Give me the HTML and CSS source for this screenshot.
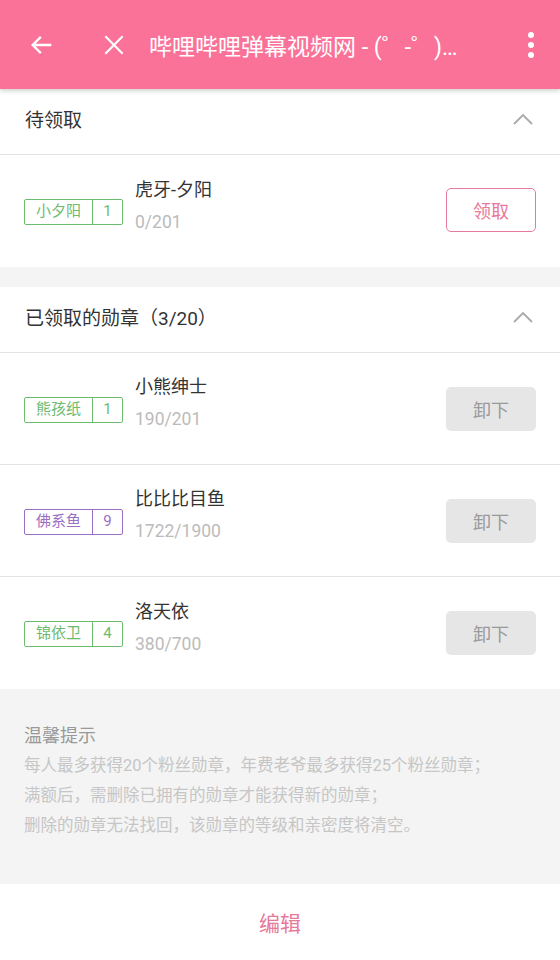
FILE: index.html
```html
<!DOCTYPE html>
<html lang="zh-CN">
<head>
    <meta charset="UTF-8">
    <meta name="viewport" content="width=device-width, initial-scale=1.0">
    <title>粉丝勋章</title>
    <link rel="stylesheet" href="styles.css">
</head>
<body>
    <div class="app">
        <div class="topbar">
            <span class="icon-btn back">
                <svg width="28" height="28" viewBox="0 0 24 24"><path d="M20 12H5M11 5l-7 7 7 7" fill="none" stroke="#fff" stroke-width="2"/></svg>
            </span>
            <span class="icon-btn close">
                <svg width="26" height="26" viewBox="0 0 24 24"><path d="M4 4l16 16M20 4L4 20" fill="none" stroke="#fff" stroke-width="2"/></svg>
            </span>
            <div class="title">哔哩哔哩弹幕视频网 - (゜-゜)つロ 干杯~-bilibili</div>
            <span class="icon-btn more">
                <svg width="10" height="28" viewBox="0 0 10 28"><circle cx="5" cy="4" r="3" fill="#fff"/><circle cx="5" cy="14" r="3" fill="#fff"/><circle cx="5" cy="24" r="3" fill="#fff"/></svg>
            </span>
        </div>

        <div class="section">
            <div class="section-head">
                <span>待领取</span>
                <svg class="chevron" width="22" height="14" viewBox="0 0 22 14"><path d="M2 12L11 3l9 9" fill="none" stroke="#aaa" stroke-width="1.8"/></svg>
            </div>
            <div class="medal-row">
                <div class="badge green"><span class="badge-name">小夕阳</span><span class="badge-level">1</span></div>
                <div class="medal-info">
                    <div class="medal-name">虎牙-夕阳</div>
                    <div class="medal-progress">0/201</div>
                </div>
                <button class="btn btn-claim">领取</button>
            </div>
        </div>

        <div class="section">
            <div class="section-head">
                <span>已领取的勋章（3/20）</span>
                <svg class="chevron" width="22" height="14" viewBox="0 0 22 14"><path d="M2 12L11 3l9 9" fill="none" stroke="#aaa" stroke-width="1.8"/></svg>
            </div>
            <div class="medal-row">
                <div class="badge green"><span class="badge-name">熊孩纸</span><span class="badge-level">1</span></div>
                <div class="medal-info">
                    <div class="medal-name">小熊绅士</div>
                    <div class="medal-progress">190/201</div>
                </div>
                <button class="btn btn-off">卸下</button>
            </div>
            <div class="medal-row">
                <div class="badge purple"><span class="badge-name">佛系鱼</span><span class="badge-level">9</span></div>
                <div class="medal-info">
                    <div class="medal-name">比比比目鱼</div>
                    <div class="medal-progress">1722/1900</div>
                </div>
                <button class="btn btn-off">卸下</button>
            </div>
            <div class="medal-row">
                <div class="badge green"><span class="badge-name">锦依卫</span><span class="badge-level">4</span></div>
                <div class="medal-info">
                    <div class="medal-name">洛天依</div>
                    <div class="medal-progress">380/700</div>
                </div>
                <button class="btn btn-off">卸下</button>
            </div>
        </div>

        <div class="tips">
            <h3>温馨提示</h3>
            <p>每人最多获得20个粉丝勋章，年费老爷最多获得25个粉丝勋章；</p>
            <p>满额后，需删除已拥有的勋章才能获得新的勋章；</p>
            <p>删除的勋章无法找回，该勋章的等级和亲密度将清空。</p>
        </div>

        <div class="footer">编辑</div>
    </div>
</body>
</html>
```

FILE: styles.css
```css
* {
    margin: 0;
    padding: 0;
    box-sizing: border-box;
}

body {
    font-family: Roboto, "Noto Sans CJK SC", sans-serif;
    background: #f4f4f4;
    width: 560px;
    height: 960px;
    overflow: hidden;
}

.app {
    display: flex;
    flex-direction: column;
    height: 960px;
}

.topbar {
    height: 89px;
    background: #fb7299;
    display: flex;
    align-items: center;
    padding: 0 24px 0 28px;
    box-shadow: 0 2px 4px rgba(0,0,0,0.18);
    position: relative;
    z-index: 1;
    flex-shrink: 0;
}

.icon-btn {
    display: flex;
    align-items: center;
}

.back {
    margin-right: 45px;
}

.close {
    margin-right: 22px;
}

.title {
    color: #fff;
    font-size: 23px;
    width: 312px;
    white-space: nowrap;
    overflow: hidden;
    text-overflow: ellipsis;
}

.more {
    margin-left: auto;
}

.section {
    background: #fff;
    margin-bottom: 20px;
}

.section-head {
    height: 66px;
    display: flex;
    align-items: center;
    justify-content: space-between;
    padding: 0 26px 6px 25px;
    font-size: 19px;
    color: #333;
    border-bottom: 1.5px solid #e3e3e3;
}

.chevron {
    margin-top: 0;
}

.medal-row {
    height: 112px;
    display: flex;
    align-items: center;
    padding: 0 24px;
    border-bottom: 1.5px solid #e3e3e3;
}

.medal-row:last-child {
    border-bottom: none;
}

.badge {
    display: flex;
    height: 26px;
    width: 99px;
    border: 1.5px solid;
    border-radius: 2px;
    font-size: 15px;
    line-height: 23px;
    margin-top: 2px;
}

.badge.green {
    border-color: #6dbb6f;
    color: #6dbb6f;
}

.badge.purple {
    border-color: #9b6fc4;
    color: #9b6fc4;
}

.badge-name {
    width: 68px;
    text-align: center;
    border-right: 1.5px solid;
}

.badge-level {
    flex: 1;
    text-align: center;
}

.medal-info {
    margin-left: 12px;
    flex: 1;
    margin-top: -10px;
}

.medal-name {
    font-size: 18px;
    color: #333;
    line-height: 28px;
}

.medal-progress {
    font-size: 17.5px;
    color: #bbb;
    line-height: 30px;
    margin-top: 3px;
}

.btn {
    width: 90px;
    height: 44px;
    border-radius: 5px;
    font-family: inherit;
    font-size: 18px;
    border: none;
    background: none;
    margin-top: -2px;
}

.btn-claim {
    border: 1.5px solid #e7799a;
    color: #e7799a;
    background: #fff;
}

.btn-off {
    background: #e6e6e6;
    color: #9a9a9a;
    margin-top: 0;
}

.tips {
    flex: 1;
    padding: 32px 24px 0;
    margin-top: -20px;
}

.tips h3 {
    font-size: 18px;
    font-weight: normal;
    color: #999;
    margin-bottom: 4px;
}

.tips p {
    font-size: 16.5px;
    color: #c6c6c6;
    line-height: 30px;
}

.footer {
    height: 76px;
    background: #fff;
    color: #e7799a;
    font-size: 21px;
    display: flex;
    align-items: center;
    justify-content: center;
    flex-shrink: 0;
}
```
